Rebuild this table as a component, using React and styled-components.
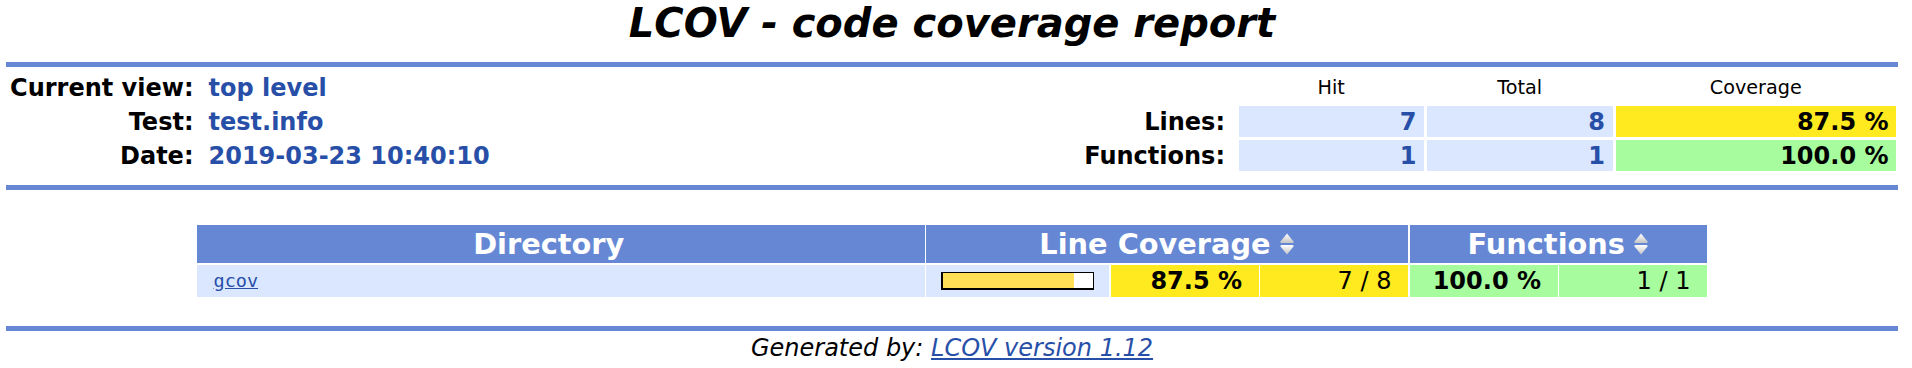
import React from "react";
import styled, { createGlobalStyle } from "styled-components";

const GlobalStyle = createGlobalStyle`
	body {
		margin: 0;
		background: #ffffff;
		font-family: "DejaVu Sans", "Liberation Sans", sans-serif;
		font-size: 24px;
		line-height: 28px;
		color: #000000;
	}
`;

const Page = styled.div`
	width: 1892px;
	margin-left: 6px;
`;

const Title = styled.h1`
	margin: 0;
	padding-bottom: 15px;
	text-align: center;
	font-size: 40px;
	line-height: 47px;
	font-style: italic;
	font-weight: bold;
`;

const Ruler = styled.div`
	height: 4.5px;
	background-color: #6688d4;
`;

const HeaderGrid = styled.div`
	display: grid;
	grid-template-columns: 198px 1fr 278px 185.5px 185.5px 280.5px;
	grid-auto-rows: 31px;
	column-gap: 3px;
	row-gap: 3px;
	padding: 5.5px 2px 14px 0;
`;

const HeaderItem = styled.div`
	text-align: right;
	padding: 1.5px 10.5px 0 0;
	font-weight: bold;
	white-space: nowrap;
`;

const HeaderValue = styled.div`
	padding: 1.5px 0 0 1.5px;
	color: #284fa8;
	font-weight: bold;
	white-space: nowrap;
`;

const CovHead = styled.div`
	align-self: center;
	text-align: center;
	font-size: 19.2px;
	line-height: 23px;
	white-space: nowrap;
`;

const levels = {
	entry: { bg: "#dae7fe", fg: "#284fa8" },
	med: { bg: "#ffea20", fg: "#000000" },
	hi: { bg: "#a7fc9d", fg: "#000000" },
};

const CovEntry = styled.div`
	display: flex;
	align-items: center;
	justify-content: flex-end;
	padding-right: 7.5px;
	font-weight: bold;
	white-space: nowrap;
	background-color: ${(p) => levels[p.$level].bg};
	color: ${(p) => levels[p.$level].fg};
`;

const DirTable = styled.div`
	display: grid;
	width: 1510px;
	margin: 35.5px auto 0;
	grid-template-columns: 1fr 183px 148px 148px 148px 148px;
	grid-template-rows: 38px 32px;
	gap: 1.5px;
`;

const TableHead = styled.div`
	grid-column: span ${(p) => p.$span || 1};
	display: flex;
	align-items: center;
	justify-content: center;
	gap: 8px;
	padding: 0 7.5px;
	background-color: #6688d4;
	color: #ffffff;
	font-size: 28.8px;
	font-weight: bold;
	white-space: nowrap;
`;

const SortSpace = styled.span`
	display: inline-block;
	width: 16px;
	height: 24px;
`;

const CoverFile = styled.div`
	display: flex;
	align-items: center;
	padding-left: 16.5px;
	background-color: #dae7fe;
	font-family: "DejaVu Sans Mono", "Liberation Mono", monospace;
	font-size: 18.5px;
`;

const Link = styled.a`
	color: #284fa8;
	text-decoration: underline;
`;

const CoverBar = styled.div`
	display: flex;
	align-items: center;
	padding-left: 15px;
	background-color: #dae7fe;
`;

const BarOutline = styled.div`
	display: flex;
	width: 150px;
	height: 15px;
	padding: 1.5px;
	background-color: #000000;
`;

const BarFill = styled.div`
	height: 100%;
	background-color: ${(p) => p.$color};
`;

const CoverCell = styled.div`
	display: flex;
	align-items: center;
	justify-content: flex-end;
	padding: 0 16.5px;
	white-space: nowrap;
	font-weight: ${(p) => (p.$bold ? "bold" : "normal")};
	background-color: ${(p) => levels[p.$level].bg};
`;

const Spacer = styled.div`
	height: 29.5px;
`;

const Footer = styled.div`
	padding-top: 3px;
	text-align: center;
	font-style: italic;
`;

function SortIcon() {
	return (
		<svg width="16" height="24" viewBox="0 0 16 24">
			<defs>
				<linearGradient id="sortShade" x1="0" y1="0" x2="0" y2="1">
					<stop offset="0" stopColor="#ffffff" />
					<stop offset="1" stopColor="#c4c4c4" />
				</linearGradient>
			</defs>
			<path d="M8 1.5 L14.5 9.5 Q15 11 13.5 11 L2.5 11 Q1 11 1.5 9.5 Z" fill="url(#sortShade)" />
			<path d="M8 22.5 L14.5 14.5 Q15 13 13.5 13 L2.5 13 Q1 13 1.5 14.5 Z" fill="url(#sortShade)" />
		</svg>
	);
}

const pct = 87.5;

export default function App() {
	return (
		<Page>
			<GlobalStyle />
			<Title>LCOV - code coverage report</Title>
			<Ruler />
			<HeaderGrid>
				<HeaderItem>Current view:</HeaderItem>
				<HeaderValue>top level</HeaderValue>
				<div />
				<CovHead>Hit</CovHead>
				<CovHead>Total</CovHead>
				<CovHead>Coverage</CovHead>

				<HeaderItem>Test:</HeaderItem>
				<HeaderValue>test.info</HeaderValue>
				<HeaderItem>Lines:</HeaderItem>
				<CovEntry $level="entry">7</CovEntry>
				<CovEntry $level="entry">8</CovEntry>
				<CovEntry $level="med">87.5 %</CovEntry>

				<HeaderItem>Date:</HeaderItem>
				<HeaderValue>2019-03-23 10:40:10</HeaderValue>
				<HeaderItem>Functions:</HeaderItem>
				<CovEntry $level="entry">1</CovEntry>
				<CovEntry $level="entry">1</CovEntry>
				<CovEntry $level="hi">100.0 %</CovEntry>
			</HeaderGrid>
			<Ruler />

			<DirTable>
				<TableHead>
					Directory <SortSpace />
				</TableHead>
				<TableHead $span={3}>
					Line Coverage <SortIcon />
				</TableHead>
				<TableHead $span={2}>
					Functions <SortIcon />
				</TableHead>

				<CoverFile>
					<Link href="#gcov">gcov</Link>
				</CoverFile>
				<CoverBar>
					<BarOutline>
						<BarFill $color="#ffdf55" style={{ width: `${pct}%` }} />
						<BarFill $color="#ffffff" style={{ width: `${100 - pct}%` }} />
					</BarOutline>
				</CoverBar>
				<CoverCell $level="med" $bold>87.5 %</CoverCell>
				<CoverCell $level="med">7 / 8</CoverCell>
				<CoverCell $level="hi" $bold>100.0 %</CoverCell>
				<CoverCell $level="hi">1 / 1</CoverCell>
			</DirTable>

			<Spacer />
			<Ruler />
			<Footer>
				Generated by: <Link href="#lcov">LCOV version 1.12</Link>
			</Footer>
		</Page>
	);
}
